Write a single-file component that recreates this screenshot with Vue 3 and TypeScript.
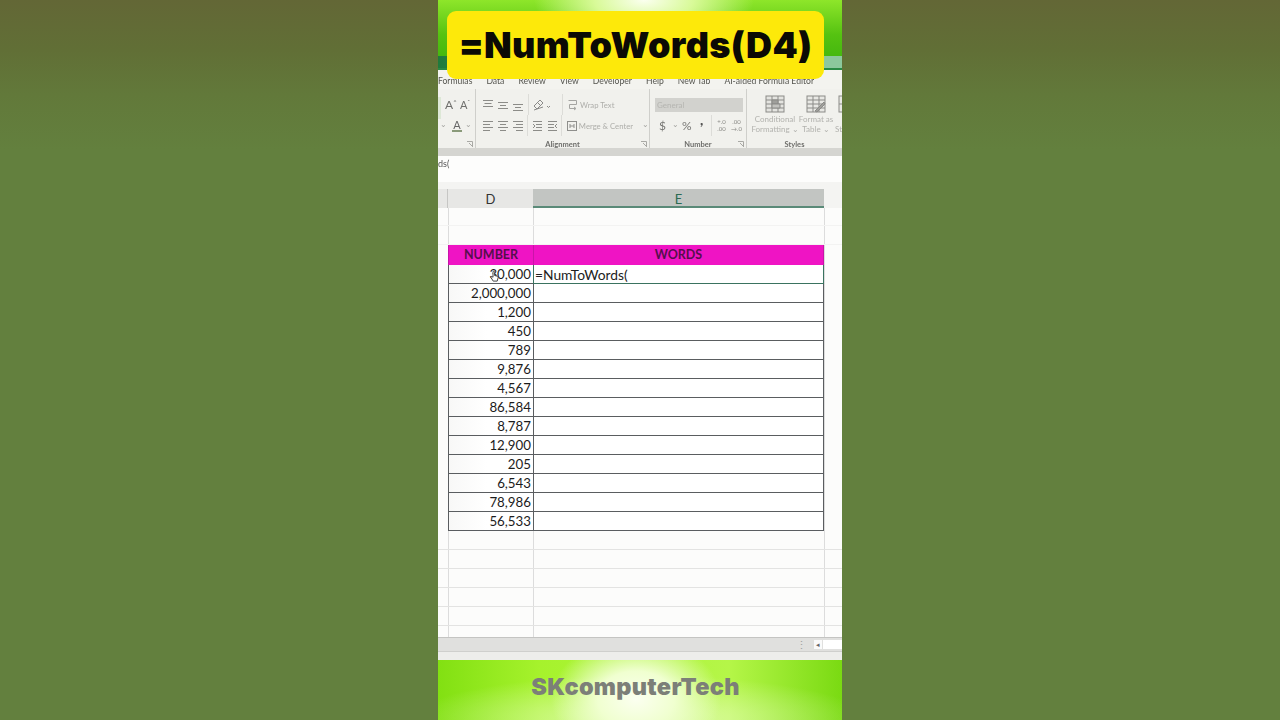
<script setup lang="ts">
const numbers: string[] = ['30,000','2,000,000','1,200','450','789','9,876','4,567','86,584','8,787','12,900','205','6,543','78,986','56,533'];
const tabs: string[] = ['Formulas','Data','Review','View','Developer','Help','New Tab','AI-aided Formula Editor'];
const blankTop: number[] = [1,2];
const blankBottom: number[] = [1,2,3,4,5,6];
</script>

<template>
  <div class="page">
    <div class="side"></div>
    <main class="phone">
      <div class="title">=NumToWords(D4)</div>
      <header class="banner"><div class="strip"></div></header>
      <nav class="tabs">
        <span v-for="t in tabs" :key="t">{{ t }}</span>
      </nav>
      <section class="ribbon">
        <div class="group g-font">
          <span class="tint"></span>
          <div class="rows">
            <div class="row"><span class="aa">A<sup>^</sup></span><span class="aa small">A<sup>ˇ</sup></span></div>
            <div class="row"><i class="chev c1">⌄</i><span class="under">A</span><i class="chev c2">⌄</i></div>
          </div>
          <svg class="launch" width="6" height="6" viewBox="0 0 6 6" stroke="#a9a9a5" fill="none"><path d="M0 .5h5.500v5.500M2 2l3 3"/></svg>
        </div>
        <div class="group g-align">
          <div class="rows">
            <div class="row">
              <div class="col-a">
                <svg width="42" height="14" viewBox="0 0 42 14" stroke="#8c8c88" fill="none"><path d="M0 2.500h10M1.500 5.500h7M0 8.500h10M15 4.500h10M17 7.500h6M15 10.500h10M30 6.500h10M32 9.500h6M30 12.500h10"/></svg>
              </div>
              <div class="col-b">
                <svg width="18" height="14" viewBox="0 0 18 14" stroke="#8a8a88" fill="none"><path d="M1 8l6-6 3 3-6 6zM4 4l3 3M1 12l9-3M14 8l1.500 1.500L17 8"/></svg>
              </div>
              <span class="wrap"><svg width="10" height="12" viewBox="0 0 10 12" stroke="#a5a5a2" fill="none"><path d="M.5 1.500h8v4h-7v4h6M6 8l2 1.500L6 11"/></svg>Wrap Text</span>
            </div>
            <div class="row">
              <div class="col-a">
                <svg width="42" height="14" viewBox="0 0 42 14" stroke="#8c8c88" fill="none"><path d="M0 2.500h10M0 5.500h7M0 8.500h10M0 11.500h7M15 2.500h10M17 5.500h6M15 8.500h10M17 11.500h6M30 2.500h10M33 5.500h7M30 8.500h10M33 11.500h7"/></svg>
              </div>
              <div class="col-b">
                <svg width="26" height="14" viewBox="0 0 26 14" stroke="#8c8c88" fill="none"><path d="M1 2.500h9M4 5.500h6M4 8.500h6M1 11.500h9M1 5l2 2-2 2M16 2.500h9M16 5.500h6M16 8.500h6M16 11.500h9M25 5l-2 2 2 2"/></svg>
              </div>
              <span class="wrap"><svg width="10" height="12" viewBox="0 0 10 12" stroke="#8f8f8c" fill="none"><rect x=".5" y="1.500" width="9" height="9"/><path d="M3 6h4M3 4v4M7 4v4"/></svg>Merge &amp; Center<i class="chev c3">⌄</i></span>
            </div>
          </div>
          <div class="glabel">Alignment</div>
          <svg class="launch" width="6" height="6" viewBox="0 0 6 6" stroke="#a9a9a5" fill="none"><path d="M0 .5h5.500v5.500M2 2l3 3"/></svg>
        </div>
        <div class="group g-num">
          <div class="rows">
            <div class="row"><div class="general">General</div></div>
            <div class="row r-num">
              <span class="sym s-d">$</span><i class="chev c4">⌄</i><span class="sym s-p">%</span><span class="sym s-c">,</span>
              <span class="inc">+.0<br>.00</span><span class="inc">.00<br>→.0</span>
            </div>
          </div>
          <div class="glabel">Number</div>
          <svg class="launch" width="6" height="6" viewBox="0 0 6 6" stroke="#a9a9a5" fill="none"><path d="M0 .5h5.500v5.500M2 2l3 3"/></svg>
        </div>
        <div class="group g-styles">
          <div class="styles">
            <div class="style-item si-1">
              <svg width="20" height="18" viewBox="0 0 20 18" stroke="#8b8b88" fill="#e4e4e0"><rect x="1" y="1" width="18" height="16"/><path d="M1 5h18M1 9h18M1 13h18M7 1v16M13 1v16" fill="none"/><path d="M7 5h6v4H7z" fill="#9f9f9b"/><path d="M7 9h8v4H7z" fill="#c2c2be"/></svg>
              <span>Conditional<br>Formatting ⌄</span>
            </div>
            <div class="style-item si-2">
              <svg width="20" height="18" viewBox="0 0 20 18" stroke="#8b8b88" fill="#e8e8e4"><rect x="1" y="1" width="18" height="16"/><path d="M1 5h18M1 9h18M1 13h18M7 1v16M13 1v16" fill="none"/><path d="M9 16l9-9 1 2-8 8z" fill="#9f9f9b"/></svg>
              <span>Format as<br>Table ⌄</span>
            </div>
            <div class="style-item cut">
              <svg width="20" height="18" viewBox="0 0 20 18" stroke="#8b8b88" fill="#e8e8e4"><rect x="1" y="1" width="18" height="16"/><path d="M1 9h18" fill="none"/></svg>
              <span class="st">St</span>
            </div>
          </div>
          <div class="glabel">Styles</div>
        </div>
      </section>
      <div class="formula">ds(</div>
      <div class="headers">
        <span class="h-gap"></span>
        <span class="h-d">D</span>
        <span class="h-e">E</span>
      </div>
      <div class="sheet">
        <div v-for="r in blankTop" :key="'t'+r" class="line top-line" :class="{ short: r === 1 }">
          <span class="c0"></span><span class="cd"></span><span class="ce"></span><span class="c9"></span>
        </div>
        <div class="line head-line">
          <span class="c0"></span>
          <span class="cd th">NUMBER</span>
          <span class="ce th">WORDS</span>
          <span class="c9"></span>
        </div>
        <div v-for="(n, i) in numbers" :key="n" class="line data-line" :class="{ active: i === 0 }">
          <span class="c0"></span>
          <span class="cd num">{{ n }}<svg v-if="i === 0" class="cursor" width="9" height="12" viewBox="0 0 9 12"><path d="M3 1.500c1-.8 1.600 0 1.600 1v3l2.400.6c1 .3 1.300 1 1 2l-.8 3H3.200L1 7.500c-.4-.8.500-1.400 1.300-.8l.7.6z" fill="#fff" stroke="#333" stroke-width=".9"/></svg></span>
          <span class="ce entry">{{ i === 0 ? '=NumToWords(' : '' }}</span>
          <span class="c9"></span>
        </div>
        <div v-for="r in blankBottom" :key="'b'+r" class="line">
          <span class="c0"></span><span class="cd"></span><span class="ce"></span><span class="c9"></span>
        </div>
      </div>
      <div class="scrollbar">
        <span class="dots">⋮</span>
        <span class="arrow">◂</span>
        <span class="track"></span>
      </div>
      <div class="status"></div>
      <footer class="footer">SKcomputerTech</footer>
    </main>
    <div class="side"></div>
  </div>
</template>

<style scoped>
.page {
  display: flex;
  width: 1280px;
  height: 720px;
  overflow: hidden;
  background: #63803e;
}
.side {
  flex: 1;
  background: linear-gradient(180deg, #636736 0, #616f36 50px, #62793a 95px, #63803e 150px, #63803e 100%);
}
.phone {
  position: relative;
  width: 404px;
  height: 720px;
  display: flex;
  flex-direction: column;
  overflow: hidden;
  background: #fff;
  font-family: Lato, "Liberation Sans", sans-serif;
}
.title {
  position: absolute;
  left: 9px;
  top: 11px;
  width: 377px;
  height: 68px;
  border-radius: 9px;
  background: #fde90a;
  color: #0b0a05;
  font-family: Inter, Roboto, sans-serif;
  font-weight: 900;
  font-size: 36px;
  letter-spacing: .3px;
  line-height: 68px;
  text-align: center;
  white-space: nowrap;
  z-index: 2;
}
.banner {
  height: 70px;
  padding-top: 56px;
  box-sizing: border-box;
  background:
    radial-gradient(ellipse 110px 48px at 51% 0, #fbfff0 0, #d8fa98 45%, rgba(170, 240, 60, 0) 100%),
    linear-gradient(180deg, #8ee62a 0, #55c211 50%, #3cb20e 100%);
}
.strip {
  height: 14px;
  background: linear-gradient(90deg, #1f7a3c 0, #2f8a4a 10%, #8cc89c 90%, #8cc89c 100%);
  border-bottom: 2px solid #2a8a44;
  box-sizing: border-box;
}
.tabs {
  height: 19px;
  display: flex;
  align-items: center;
  background: #f3f3ef;
  font-size: 8.600px;
  color: #55554f;
  white-space: nowrap;
  gap: 14px;
  padding-top: 2px;
  box-sizing: border-box;
  filter: blur(.4px);
}
.ribbon {
  height: 59px;
  display: flex;
  background: #f1f1ed;
  border-bottom: 8px solid #d5d5d1;
  box-sizing: content-box;
  filter: blur(.35px);
  color: #9a9a96;
  overflow: hidden;
}
.group {
  position: relative;
  flex: none;
  border-right: 1px solid #cfcfcb;
  box-sizing: border-box;
  height: 59px;
}
.g-font { width: 38px; padding-left: 7px; }
.g-align { width: 174px; padding-left: 7px; }
.g-num { width: 97px; padding-left: 5px; }
.g-styles { width: 95px; border-right: 0; overflow: hidden; }
.tint { position: absolute; left: 0; top: 8px; width: 3px; height: 22px; background: #dde8d6; }
.rows { display: flex; flex-direction: column; padding-top: 5px; }
.row { height: 21px; display: flex; align-items: center; white-space: nowrap; }
.aa { font-size: 12px; color: #6f6f6c; width: 16px; line-height: 14px; }
.aa.small { font-size: 11px; }
.aa sup { font-size: 6px; line-height: 0; }
.under {
  font-size: 11px;
  line-height: 11px;
  color: #666;
  border-bottom: 2px solid #8a9a7a;
  width: 10px;
  text-align: center;
}
.col-a { width: 45px; height: 21px; border-right: 1px solid #dcdcd8; display: flex; align-items: center; }
.col-b { width: 29px; height: 21px; margin-left: 4px; border-right: 1px solid #dcdcd8; display: flex; align-items: center; margin-right: 5px; }
.wrap { display: flex; align-items: center; gap: 2px; font-size: 7.700px; color: #aeaeaa; }
.chev { font-style: normal; font-size: 8px; color: #a5a5a1; line-height: 8px; }
.c1 { margin: 0 5px 4px -5px; }
.c2 { margin: 0 0 4px 3px; }
.c3 { margin: 0 0 4px 7px; }
.general {
  width: 88px;
  height: 14px;
  background: #d2d2ce;
  color: #b5b5b1;
  font-size: 8px;
  line-height: 14px;
  padding-left: 2px;
  box-sizing: border-box;
}
.sym { font-size: 12px; color: #777774; }
.s-d { margin-left: 4px; }
.c4 { margin: 0 3px 4px 6px; }
.s-p { width: 18px; }
.s-c { font-weight: 900; color: #555; width: 11px; font-size: 14px; line-height: 10px; border-right: 1px solid #dcdcd8; height: 21px; }
.inc { font-size: 6px; line-height: 6.500px; color: #8a8a86; margin-left: 4px; width: 11px; text-align: center; }
.glabel {
  position: absolute;
  left: 0;
  right: 0;
  top: 51px;
  text-align: center;
  font-size: 7.500px;
  font-weight: 700;
  color: #6d6d6a;
}
.launch { position: absolute; right: 2px; bottom: 1px; }
.styles { display: flex; padding: 6px 0 0 0; }
.style-item {
  flex: none;
  display: flex;
  flex-direction: column;
  align-items: center;
  gap: 1px;
  font-size: 8px;
  line-height: 10px;
  color: #b2b2ae;
  text-align: center;
  white-space: nowrap;
}
.si-1 { width: 56px; }
.si-2 { width: 26px; }
.cut { width: 20px; margin-left: 9px; align-items: flex-start; }
.st { margin: 10px 0 0 -3px; }
.formula {
  height: 26px;
  background: #fdfdfc;
  font-size: 9px;
  line-height: 15px;
  color: #555;
  filter: blur(.3px);
}
.headers {
  height: 26px;
  display: flex;
  background: #f4f4f2;
  padding-top: 7px;
  box-sizing: border-box;
  font-size: 13px;
  color: #333;
  text-align: center;
  line-height: 21px;
}
.h-gap { width: 10px; background: #e7e7e5; border-right: 1px solid #c6c6c4; box-sizing: border-box; }
.h-d { width: 85px; background: #e7e7e5; }
.h-e { width: 291px; background: #c2c5c2; color: #2a6a52; border-bottom: 2px solid #5a8a78; box-sizing: border-box; line-height: 20px; }
.sheet {
  height: 429px;
  overflow: hidden;
  background: #fcfcfb;
  display: flex;
  flex-direction: column;
}
.line {
  flex: none;
  height: 19px;
  display: flex;
  box-sizing: border-box;
  border-bottom: 1px solid #e3e3e2;
}
.line span { box-sizing: border-box; }
.top-line { border-bottom-color: #f3f3f2; }
.short { height: 18px; }
.c0 { width: 10px; flex: none; }
.cd { width: 85px; flex: none; border-left: 1px solid #dcdcdc; }
.ce { width: 291px; flex: none; border-left: 1px solid #dcdcdc; }
.c9 { flex: 1; border-left: 1px solid #dcdcdc; }
.head-line { height: 20px; border-bottom: 0; }
.th {
  background: #ef14c4;
  color: #560f4c;
  font-weight: 700;
  font-size: 12.500px;
  line-height: 20px;
  text-align: center;
  border-left: 1px solid #c914a8;
}
.head-line .ce { border-right: 1px solid #c914a8; }
.data-line { border-bottom: 0; }
.data-line .cd, .data-line .ce {
  background: #fff;
  border-left: 1px solid #5a5d60;
  border-bottom: 1px solid #5a5d60;
}
.data-line .cd { background: linear-gradient(90deg, #f8f8f7, #fff 45%); }
.data-line .ce { border-right: 1px solid #5a5d60; }
.num {
  position: relative;
  font-size: 13.300px;
  line-height: 19px;
  text-align: right;
  padding-right: 2px;
  color: #1c1c1c;
}
.entry {
  font-size: 13.800px;
  line-height: 19px;
  padding-left: 1px;
  color: #222;
  white-space: nowrap;
}
.active .ce { border-color: #3a7360; }
.cursor { position: absolute; left: 41px; top: 5px; }
.scrollbar {
  height: 15px;
  background: #e0e0de;
  border-top: 1px solid #c4c4c2;
  border-bottom: 1px solid #cfcfcd;
  box-sizing: border-box;
  display: flex;
  align-items: center;
  justify-content: flex-end;
  color: #666;
  font-size: 8px;
}
.dots { margin-right: 7px; color: #a0a09e; font-size: 11px; }
.arrow { width: 8px; height: 9px; background: #fafafa; text-align: center; line-height: 9px; font-size: 7px; margin-right: 1px; }
.track { width: 19px; height: 9px; background: #fff; }
.status { height: 8px; background: #ededeb; }
.footer {
  flex: 1;
  text-align: center;
  padding-right: 9px;
  font-family: Inter, Roboto, sans-serif;
  font-weight: 900;
  font-size: 23.500px;
  letter-spacing: .3px;
  line-height: 54px;
  color: #7c7f78;
  background:
    radial-gradient(ellipse 85px 62px at 49% 65%, #fbfff0 0, #f0ffd0 45%, rgba(220, 255, 150, 0) 100%),
    radial-gradient(ellipse 230px 45px at 50% 100%, rgba(240, 255, 210, .75) 0, rgba(220, 255, 150, 0) 100%),
    linear-gradient(90deg, #82e012 0, #a6f22c 25%, #b5f648 72%, #7ada12 100%);
}
</style>
